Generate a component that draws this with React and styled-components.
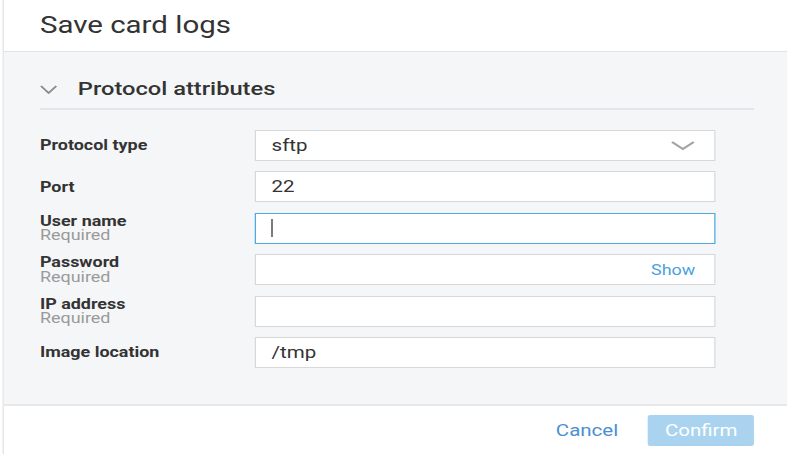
import React from 'react'
import styled, { createGlobalStyle } from 'styled-components'

// the reference shot is stretched sideways, so the page is laid out narrow and widened once
const STRETCH = 1.28

const Global = createGlobalStyle`
  html, body {
    margin: 0;
    background: #fff;
    overflow: hidden;
  }
  body {
    font-family: Roboto, "Liberation Sans", Arial, sans-serif;
    color: #333;
  }
`

const Stage = styled.div`
  width: ${799 / STRETCH}px;
  height: 454px;
  transform: scaleX(${STRETCH});
  transform-origin: 0 0;
`

const Dialog = styled.section`
  margin-left: 2px;
  width: 612px;
  height: 454px;
  border-left: 1px solid #e2e2e2;
  display: flex;
  flex-direction: column;
  background: #fff;
`

const Header = styled.header`
  height: 51px;
  border-bottom: 1px solid #e3e4e6;
  display: flex;
  align-items: center;
  padding-left: 28.2px;
`

const Title = styled.h1`
  margin: 0;
  font-size: 23px;
  font-weight: 400;
  color: #333;
`

const Body = styled.div`
  background: #f5f6f8;
  padding: 0 25.7px 0 28.2px;
  height: 354px;
  box-sizing: border-box;
  border-bottom: 2px solid #e7e8ea;
`

const SectionHead = styled.div`
  height: 58px;
  padding-top: 18px;
  box-sizing: border-box;
  display: flex;
  align-items: center;
  gap: 15.6px;
  border-bottom: 2px solid #e3e5e8;
`

const SectionTitle = styled.h2`
  margin: 0;
  font-size: 18.5px;
  font-weight: 500;
  color: #333;
`

const Form = styled.div`
  margin-top: 20px;
  display: grid;
  grid-template-columns: 168px 360px;
  grid-auto-rows: 31px;
  row-gap: 10.4px;
`

const Label = styled.div`
  display: flex;
  flex-direction: column;
  justify-content: center;
  line-height: 14.5px;
  font-size: 14px;
`

const LabelText = styled.span`
  font-weight: 700;
  color: #333;
`

const Hint = styled.span`
  color: #9a9a9a;
`

const Box = styled.div`
  box-sizing: border-box;
  height: 31px;
  background: #fff;
  border: 1px solid ${(p) => (p.$focused ? '#4faae3' : '#d7d8da')};
  display: flex;
  align-items: center;
  padding: 0 15px 0 12px;
  font-size: 16px;
  color: #333;
`

const Value = styled.span`
  flex: 1;
`

const Caret = styled.span`
  width: 1.3px;
  height: 18px;
  background: #333;
`

const Show = styled.span`
  font-size: 14px;
  color: #4a9fe0;
`

const Footer = styled.footer`
  flex: 1;
  display: flex;
  justify-content: flex-end;
  align-items: flex-start;
  gap: 23.4px;
  padding: 9px 25.7px 0 0;
`

const TextButton = styled.button`
  border: none;
  background: none;
  padding: 0;
  height: 31px;
  font-family: inherit;
  font-size: 16px;
  color: #4a8fd2;
`

const PrimaryButton = styled.button`
  border: none;
  border-radius: 2px;
  width: 83px;
  height: 31px;
  background: #a9d3ef;
  color: #fff;
  font-family: inherit;
  font-size: 16px;
`

const Chevron = ({ w, h, color, weight = 1.6 }) => (
  <svg width={w} height={h} viewBox={`0 0 ${w} ${h}`} fill="none">
    <path d={`M1 1 L${w / 2} ${h - 1} L${w - 1} 1`} stroke={color} strokeWidth={weight} />
  </svg>
)

const fields = [
  { label: 'Protocol type', value: 'sftp', select: true },
  { label: 'Port', value: '22' },
  { label: 'User name', hint: 'Required', focused: true },
  { label: 'Password', hint: 'Required', show: true },
  { label: 'IP address', hint: 'Required' },
  { label: 'Image location', value: '/tmp' },
]

export default function App() {
  return (
    <>
      <Global />
      <Stage>
        <Dialog>
          <Header>
            <Title>Save card logs</Title>
          </Header>
          <Body>
            <SectionHead>
              <Chevron w={14} h={9} color="#8a8a8a" />
              <SectionTitle>Protocol attributes</SectionTitle>
            </SectionHead>
            <Form>
              {fields.map((f) => (
                <React.Fragment key={f.label}>
                  <Label>
                    <LabelText>{f.label}</LabelText>
                    {f.hint && <Hint>{f.hint}</Hint>}
                  </Label>
                  <Box $focused={f.focused}>
                    {f.focused && <Caret />}
                    <Value>{f.value}</Value>
                    {f.select && <Chevron w={19} h={9} color="#a3a3a3" weight={1.9} />}
                    {f.show && <Show>Show</Show>}
                  </Box>
                </React.Fragment>
              ))}
            </Form>
          </Body>
          <Footer>
            <TextButton>Cancel</TextButton>
            <PrimaryButton>Confirm</PrimaryButton>
          </Footer>
        </Dialog>
      </Stage>
    </>
  )
}
